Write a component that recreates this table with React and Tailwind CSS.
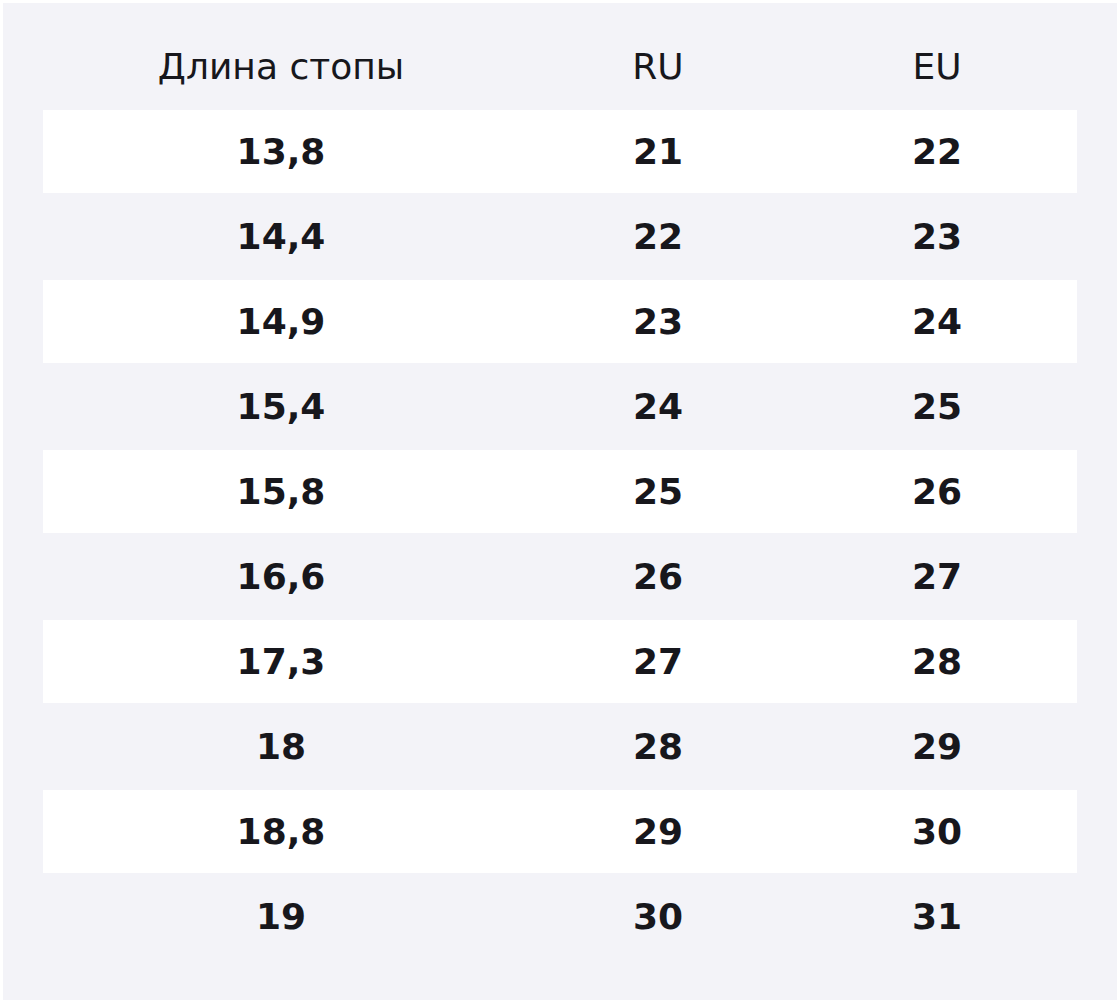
const rows = [
  ['13,8', '21', '22'],
  ['14,4', '22', '23'],
  ['14,9', '23', '24'],
  ['15,4', '24', '25'],
  ['15,8', '25', '26'],
  ['16,6', '26', '27'],
  ['17,3', '27', '28'],
  ['18', '28', '29'],
  ['18,8', '29', '30'],
  ['19', '30', '31'],
];

export default function App() {
  return (
    <div
      className="bg-white p-[3px] text-[#17171c]"
      style={{ fontFamily: '"DejaVu Sans", sans-serif' }}
    >
      <div className="bg-[#f3f3f8] px-10 pt-5 pb-10">
        <div className="grid h-[87px] grid-cols-[476px_278px_1fr] items-center text-center text-[36px] font-normal">
          <div>Длина стопы</div>
          <div>RU</div>
          <div>EU</div>
        </div>
        {rows.map((r, i) => (
          <div
            key={r[0]}
            className={
              i % 2 === 0
                ? 'grid h-[83px] grid-cols-[476px_278px_1fr] items-center bg-white text-center text-[36px] font-bold'
                : 'grid h-[87px] grid-cols-[476px_278px_1fr] items-center text-center text-[36px] font-bold'
            }
          >
            <div>{r[0]}</div>
            <div>{r[1]}</div>
            <div>{r[2]}</div>
          </div>
        ))}
      </div>
    </div>
  );
}
